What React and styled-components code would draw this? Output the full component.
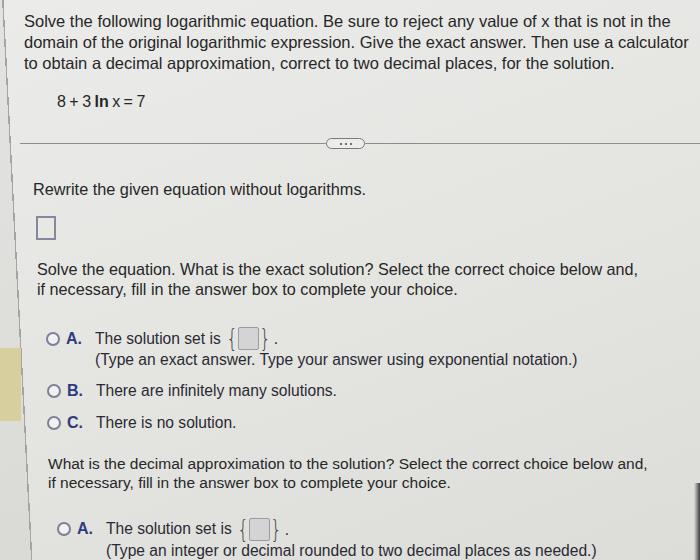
import React from "react";
import styled, { createGlobalStyle } from "styled-components";

const Global = createGlobalStyle`
  html, body { margin: 0; padding: 0; }
  body { font-family: "Liberation Sans", Arial, sans-serif; }
`;

const Page = styled.div`
  width: 700px;
  height: 560px;
  overflow: hidden;
  box-sizing: border-box;
  color: #272727;
  font-size: 16px;
  background:
    linear-gradient(#d8cf9f, #d8cf9f) 0 348px / 21px 73px no-repeat,
    linear-gradient(90deg, transparent 0, #3c3c3c 100%) 100% 483px / 6px 77px no-repeat,
    linear-gradient(87.04deg, rgba(0,0,0,0.035) 0, rgba(0,0,0,0.035) 31px, #a4a4a4 31px, #a4a4a4 32.4px, transparent 32.4px),
    linear-gradient(160deg, #ebebe9 0%, #e4e4e1 55%, #dcdcd9 100%);
  display: flex;
  flex-direction: column;
`;

const Intro = styled.section`
  padding: 11px 0 0 24px;
  white-space: nowrap;
`;

const Para = styled.p`
  margin: 0;
  white-space: nowrap;
  line-height: ${(p) => p.$lh || 21}px;
  font-size: ${(p) => p.$size || 16}px;
`;

const Equation = styled.div`
  margin: 18px 0 0 57px;
  font-size: 16px;
  line-height: 20px;
  word-spacing: -1px;
  b { font-weight: bold; }
`;

const Divider = styled.div`
  display: grid;
  grid-template-columns: 306px 39px 1fr;
  align-items: center;
  margin: 26px 0 0 20px;
`;

const Rule = styled.div`
  height: 1px;
  background: #8e8e8e;
`;

const Pill = styled.div`
  height: 11px;
  box-sizing: border-box;
  border: 1.5px solid #7a7a7a;
  border-radius: 6px;
  display: flex;
  align-items: center;
  justify-content: center;
  gap: 3px;
  background: #ececea;
`;

const Dot = styled.span`
  width: 2px;
  height: 2px;
  border-radius: 50%;
  background: #444;
`;

const Section = styled.section`
  padding-left: ${(p) => p.$left}px;
  margin-top: ${(p) => p.$top}px;
`;

const EmptyBox = styled.div`
  width: 20px;
  height: 24px;
  box-sizing: border-box;
  border: 2px solid #85889c;
  margin: 16px 0 0 3px;
`;

const Options = styled.div`
  display: flex;
  flex-direction: column;
  margin-top: ${(p) => p.$top}px;
  padding-left: ${(p) => p.$left}px;
  font-size: 15.6px;
`;

const Option = styled.div`
  display: grid;
  grid-template-columns: 14px 23px 1fr;
  column-gap: 6px;
  align-items: start;
  margin-top: ${(p) => p.$top || 0}px;
  margin-left: ${(p) => p.$shift || 0}px;
`;

const Radio = styled.span`
  width: 14px;
  height: 14px;
  box-sizing: border-box;
  border: 2px solid #7c809b;
  border-radius: 50%;
  background: #f1f1f0;
  margin-top: 3.5px;
`;

const Letter = styled.span`
  font-weight: bold;
  color: #2f3b7e;
  line-height: 21px;
  font-size: 16px;
`;

const OptText = styled.div`
  line-height: 21px;
  color: #2a2a33;
  white-space: nowrap;
`;

const Inline = styled.span`
  display: inline-flex;
  align-items: center;
  vertical-align: middle;
  height: 21px;
  margin: -2px 0 0 1px;
`;

const Brace = styled.span`
  font-size: 25px;
  line-height: 21px;
  color: #3f3f3f;
  font-family: "DejaVu Sans", sans-serif;
  font-weight: 200;
  margin: 0 -2px;
  transform: scaleX(0.7);
`;

const FillBox = styled.span`
  display: inline-block;
  width: 21px;
  height: 23px;
  box-sizing: border-box;
  background: #d4d4d4;
  border: 1px solid #9b9ba8;
  border-radius: 2px;
  margin: 0 0px;
`;

const Period = styled.span`
  margin-left: 3px;
`;

const Answer = () => (
  <Inline>
    <Brace>{"{"}</Brace>
    <FillBox />
    <Brace>{"}"}</Brace>
    <Period>.</Period>
  </Inline>
);

export default function App() {
  return (
    <>
      <Global />
      <Page>
        <Intro>
          <Para $size={16.5}>
            Solve the following logarithmic equation. Be sure to reject any value of x that is not in the
            <br />
            domain of the original logarithmic expression. Give the exact answer. Then use a calculator
            <br />
            to obtain a decimal approximation, correct to two decimal places, for the solution.
          </Para>
        </Intro>
        <Equation>
          8 + 3 <b>ln</b> x = 7
        </Equation>
        <Divider>
          <Rule />
          <Pill>
            <Dot />
            <Dot />
            <Dot />
          </Pill>
          <Rule />
        </Divider>

        <Section $left={33} $top={30}>
          <Para $size={16.3}>Rewrite the given equation without logarithms.</Para>
          <EmptyBox />
        </Section>

        <Section $left={37} $top={19}>
          <Para $lh={20} $size={16.2}>
            Solve the equation. What is the exact solution? Select the correct choice below and,
            <br />
            if necessary, fill in the answer box to complete your choice.
          </Para>
          <Options $top={29} $left={9}>
            <Option>
              <Radio />
              <Letter>A.</Letter>
              <OptText>
                The solution set is <Answer />
                <br />
                (Type an exact answer. Type your answer using exponential notation.)
              </OptText>
            </Option>
            <Option $top={10} $shift={1}>
              <Radio />
              <Letter>B.</Letter>
              <OptText>There are infinitely many solutions.</OptText>
            </Option>
            <Option $top={11} $shift={1}>
              <Radio />
              <Letter>C.</Letter>
              <OptText>There is no solution.</OptText>
            </Option>
          </Options>
        </Section>

        <Section $left={48} $top={21}>
          <Para $lh={19} $size={15.5}>
            What is the decimal approximation to the solution? Select the correct choice below and,
            <br />
            if necessary, fill in the answer box to complete your choice.
          </Para>
          <Options $top={26} $left={9}>
            <Option>
              <Radio />
              <Letter>A.</Letter>
              <OptText>
                The solution set is <Answer />
                <br />
                (Type an integer or decimal rounded to two decimal places as needed.)
              </OptText>
            </Option>
          </Options>
        </Section>
      </Page>
    </>
  );
}
